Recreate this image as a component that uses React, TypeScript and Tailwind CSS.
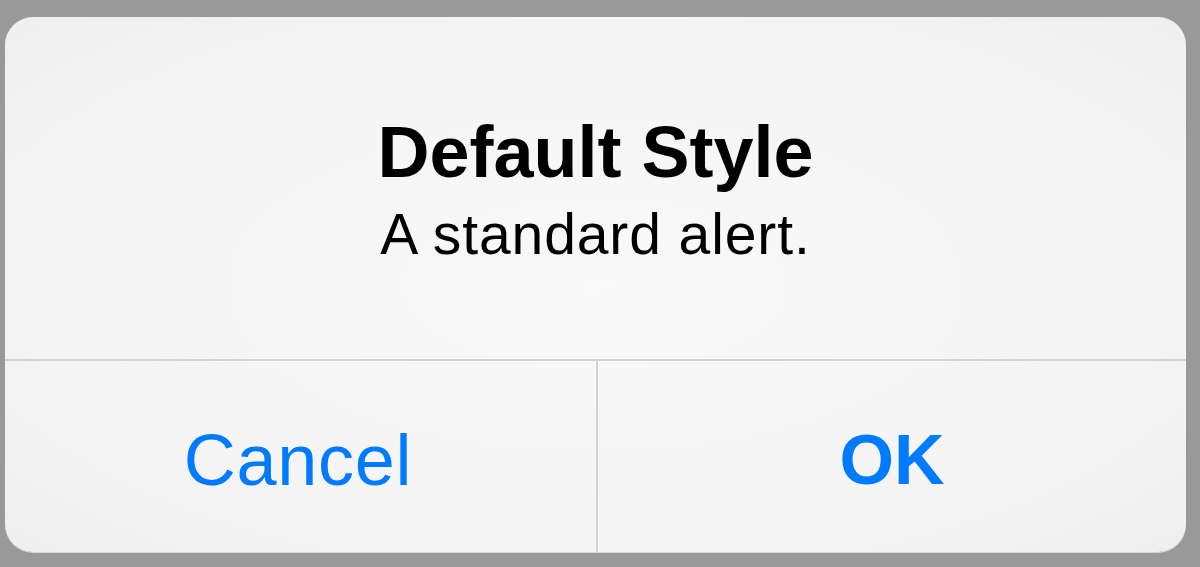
const App = () => {
  return (
    <div
      className="h-[567px] w-[1200px] overflow-hidden bg-[#999999] pt-[17px] pl-[5px]"
      style={{ fontFamily: '"Liberation Sans", Arial, sans-serif' }}
    >
      {/* Alert card */}
      <div className="flex h-[535px] w-[1181px] flex-col overflow-hidden rounded-[28px] bg-[radial-gradient(ellipse_at_center,#f9f9f9_0%,#f4f4f4_70%,#efefef_100%)] shadow-[0_1px_0_#d8d8d8]">
        <div className="flex h-[342px] flex-col items-center pt-[99px] text-black">
          <div className="text-[72px] font-bold leading-[72px]">Default Style</div>
          <div className="mt-[14px] text-[57px] leading-[64px] tracking-[0.9px]">
            A standard alert.
          </div>
        </div>
        <div className="h-[2px] bg-[#d3d3d3]"></div>
        <div className="flex flex-1">
          <div className="flex w-[591px] items-center justify-center pt-[6px] pr-[5px] text-[72px] leading-[72px] tracking-[0.7px] text-[#007aff]">
            Cancel
          </div>
          <div className="w-[2px] bg-[#d3d3d3]"></div>
          <div className="flex flex-1 items-center justify-center pt-[6px] text-[70px] font-bold leading-[72px] text-[#007aff]">
            OK
          </div>
        </div>
      </div>
    </div>
  );
};

export default App;
